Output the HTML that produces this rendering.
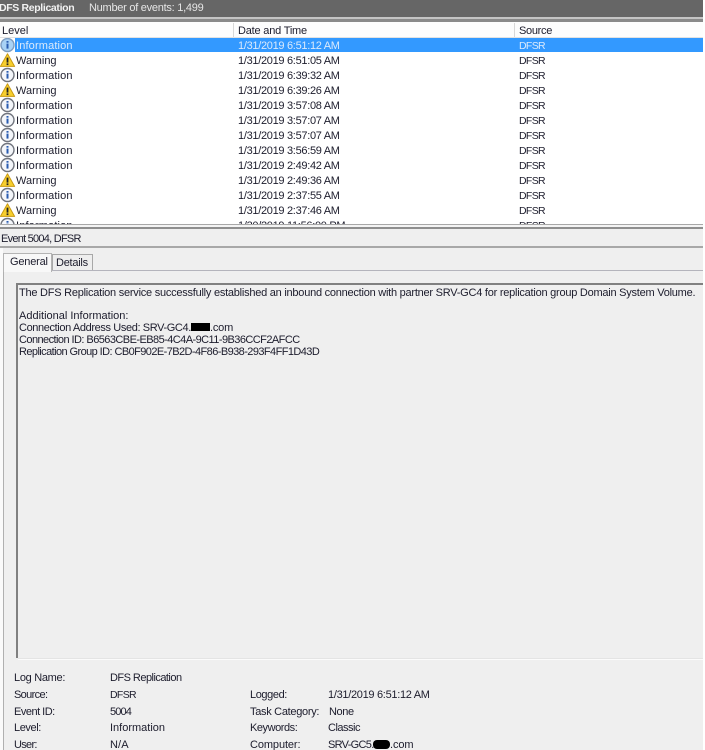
<!DOCTYPE html>
<html><head><meta charset="utf-8">
<style>
html,body{margin:0;padding:0;background:#fff;}
#p{position:relative;width:705px;height:750px;overflow:hidden;background:#fff;font-family:"Liberation Sans",sans-serif;font-size:11px;color:#1c1c2c;filter:blur(0.25px);}
#p div{position:absolute;}
.t{white-space:nowrap;line-height:14px;height:14px;}
.d{left:238px;letter-spacing:-0.3px;}
.s{left:519px;font-size:10.5px;letter-spacing:-0.65px;}
.l{left:16px;}
.f{letter-spacing:0.15px;}
.w{color:#dbeafc;}
</style></head><body>
<div id="p">
<div style="left:0;top:0;width:703px;height:17px;background:#666"></div>
<div style="left:0;top:17px;width:703px;height:2px;background:#c4c4c4"></div>
<div style="left:0;top:19px;width:703px;height:3px;background:#8a8a8a"></div>
<div class="t" style="left:-1px;top:1px;color:#f2f2f2;font-weight:bold;font-size:10.5px;letter-spacing:-0.35px">DFS Replication</div>
<div class="t" style="left:89px;top:1px;color:#e6e6e6;letter-spacing:-0.26px">Number of events: 1,499</div>

<div style="left:0;top:22px;width:703px;height:15px;background:#fdfdfd;border-bottom:1px solid #e2e2e2"></div>
<div style="left:233px;top:23px;width:1px;height:14px;background:#d8d8d8"></div>
<div style="left:514px;top:23px;width:1px;height:14px;background:#d8d8d8"></div>
<div class="t" style="left:2px;top:24px">Level</div>
<div class="t" style="left:238px;top:24px;letter-spacing:-0.2px">Date and Time</div>
<div class="t" style="left:519px;top:24px;letter-spacing:-0.3px">Source</div>

<div style="left:15px;top:38px;width:688px;height:14px;background:#3399ff"></div>

<svg width="16" height="200" style="position:absolute;left:0;top:38px" viewBox="0 0 16 200">
<defs>
<g id="inf"><circle cx="7.5" cy="7" r="6.5" fill="#f4f6fa" stroke="#71757e" stroke-width="1.4"/><rect x="6.5" y="5.6" width="2" height="5" fill="#2a5cb0"/><rect x="6.5" y="3" width="2" height="1.7" fill="#2a5cb0"/></g>
<g id="war"><path d="M7.5 .8 L14.6 13.4 H.4 Z" fill="#f7cf2e" stroke="#c99a12" stroke-width="1" stroke-linejoin="round"/><rect x="6.6" y="4.6" width="1.8" height="5" fill="#222"/><rect x="6.6" y="10.4" width="1.8" height="1.7" fill="#222"/></g>
</defs>
<g><circle cx="7.5" cy="7" r="6.5" fill="#a9d2f5" stroke="#7d9cc0" stroke-width="1.4"/><rect x="6.5" y="5.6" width="2" height="5" fill="#2a5cb0"/><rect x="6.5" y="3" width="2" height="1.7" fill="#2a5cb0"/></g>
<use href="#war" y="15"/><use href="#inf" y="30"/><use href="#war" y="45"/><use href="#inf" y="60"/><use href="#inf" y="75"/><use href="#inf" y="90"/><use href="#inf" y="105"/><use href="#inf" y="120"/><use href="#war" y="135"/><use href="#inf" y="150"/><use href="#war" y="165"/><use href="#inf" y="180"/>
</svg>

<div class="t l f w" style="top:39px">Information</div><div class="t d w" style="top:39px">1/31/2019 6:51:12 AM</div><div class="t s w" style="top:39px">DFSR</div>
<div class="t l" style="top:54px">Warning</div><div class="t d" style="top:54px">1/31/2019 6:51:05 AM</div><div class="t s" style="top:54px">DFSR</div>
<div class="t l f" style="top:69px">Information</div><div class="t d" style="top:69px">1/31/2019 6:39:32 AM</div><div class="t s" style="top:69px">DFSR</div>
<div class="t l" style="top:84px">Warning</div><div class="t d" style="top:84px">1/31/2019 6:39:26 AM</div><div class="t s" style="top:84px">DFSR</div>
<div class="t l f" style="top:99px">Information</div><div class="t d" style="top:99px">1/31/2019 3:57:08 AM</div><div class="t s" style="top:99px">DFSR</div>
<div class="t l f" style="top:114px">Information</div><div class="t d" style="top:114px">1/31/2019 3:57:07 AM</div><div class="t s" style="top:114px">DFSR</div>
<div class="t l f" style="top:129px">Information</div><div class="t d" style="top:129px">1/31/2019 3:57:07 AM</div><div class="t s" style="top:129px">DFSR</div>
<div class="t l f" style="top:144px">Information</div><div class="t d" style="top:144px">1/31/2019 3:56:59 AM</div><div class="t s" style="top:144px">DFSR</div>
<div class="t l f" style="top:159px">Information</div><div class="t d" style="top:159px">1/31/2019 2:49:42 AM</div><div class="t s" style="top:159px">DFSR</div>
<div class="t l" style="top:174px">Warning</div><div class="t d" style="top:174px">1/31/2019 2:49:36 AM</div><div class="t s" style="top:174px">DFSR</div>
<div class="t l f" style="top:189px">Information</div><div class="t d" style="top:189px">1/31/2019 2:37:55 AM</div><div class="t s" style="top:189px">DFSR</div>
<div class="t l" style="top:204px">Warning</div><div class="t d" style="top:204px">1/31/2019 2:37:46 AM</div><div class="t s" style="top:204px">DFSR</div>
<div class="t l f" style="top:219px">Information</div><div class="t d" style="top:219px">1/30/2019 11:56:00 PM</div><div class="t s" style="top:219px">DFSR</div>

<!-- lower pane -->
<div style="left:0;top:224px;width:703px;height:526px;background:#efefef"></div>
<div style="left:0;top:224px;width:703px;height:1px;background:#a8a8a8"></div>
<div style="left:0;top:225px;width:703px;height:2px;background:#f4f4f4"></div>
<div style="left:0;top:227px;width:703px;height:2px;background:#8f8f8f"></div>
<div class="t" style="left:1px;top:232px;letter-spacing:-0.75px">Event 5004, DFSR</div>
<div style="left:0;top:246px;width:703px;height:2px;background:#a8a8a8"></div>

<div style="left:0;top:270px;width:703px;height:1px;background:#b4b4bc"></div>
<div style="left:3px;top:271px;width:1px;height:479px;background:#b0b0b0"></div>
<div style="left:0;top:248px;width:3px;height:502px;background:#fafafa"></div>

<div style="left:3px;top:253px;width:49px;height:19px;background:#f8f8f8;border:1px solid #b4b4b4;border-bottom:none;box-sizing:border-box"></div>
<div class="t" style="left:10px;top:255px;letter-spacing:-0.2px">General</div>
<div style="left:52px;top:254px;width:41px;height:16px;background:#eeeeee;border:1px solid #a8a8a8;border-bottom:none;box-sizing:border-box"></div>
<div class="t" style="left:56px;top:256px;letter-spacing:-0.25px">Details</div>

<div style="left:16px;top:283px;width:687px;height:2px;background:#808080"></div>
<div style="left:16px;top:283px;width:2px;height:375px;background:#808080"></div>
<div style="left:18px;top:658px;width:685px;height:1px;background:#e4e4e4"></div>
<div style="left:18px;top:659px;width:685px;height:1px;background:#fbfbfb"></div>

<div class="t" style="left:19px;top:286px;letter-spacing:-0.24px">The DFS Replication service successfully established an inbound connection with partner SRV-GC4 for replication group Domain System Volume.</div>
<div class="t" style="left:19px;top:309px">Additional Information:</div>
<div class="t" style="left:19px;top:321px;letter-spacing:-0.38px">Connection Address Used: SRV-GC4.</div>
<div style="left:191px;top:323px;width:19px;height:8px;background:#000"></div>
<div class="t" style="left:210px;top:321px;letter-spacing:-0.2px">.com</div>
<div class="t" style="left:19px;top:333px;letter-spacing:-0.56px">Connection ID: B6563CBE-EB85-4C4A-9C11-9B36CCF2AFCC</div>
<div class="t" style="left:19px;top:345px;letter-spacing:-0.58px">Replication Group ID: CB0F902E-7B2D-4F86-B938-293F4FF1D43D</div>

<div class="t" style="left:14px;top:671px;letter-spacing:-0.3px">Log Name:</div><div class="t" style="left:110px;top:671px;letter-spacing:-0.53px">DFS Replication</div>
<div class="t" style="left:14px;top:688px;letter-spacing:-0.65px">Source:</div><div class="t" style="left:110px;top:688px;font-size:10.5px;letter-spacing:-0.65px">DFSR</div>
<div class="t" style="left:250px;top:688px;letter-spacing:-0.4px">Logged:</div><div class="t" style="left:328px;top:688px;letter-spacing:-0.3px">1/31/2019 6:51:12 AM</div>
<div class="t" style="left:14px;top:705px;letter-spacing:-0.5px">Event ID:</div><div class="t" style="left:110px;top:705px;letter-spacing:-0.85px">5004</div>
<div class="t" style="left:250px;top:705px;letter-spacing:-0.3px">Task Category:</div><div class="t" style="left:329px;top:705px;letter-spacing:-0.4px">None</div>
<div class="t" style="left:14px;top:721px;letter-spacing:-0.4px">Level:</div><div class="t" style="left:110px;top:721px">Information</div>
<div class="t" style="left:250px;top:721px;letter-spacing:-0.45px">Keywords:</div><div class="t" style="left:328px;top:721px;letter-spacing:-0.5px">Classic</div>
<div class="t" style="left:14px;top:738px;letter-spacing:-0.7px">User:</div><div class="t" style="left:110px;top:738px;letter-spacing:0.1px">N/A</div>
<div class="t" style="left:250px;top:738px;letter-spacing:-0.1px">Computer:</div><div class="t" style="left:328px;top:738px;letter-spacing:-0.7px">SRV-GC5.</div>
<div style="left:373px;top:740px;width:17px;height:9px;background:#000;border-radius:4px"></div>
<div class="t" style="left:390px;top:738px;letter-spacing:-0.1px">.com</div>
</div>
</body></html>
